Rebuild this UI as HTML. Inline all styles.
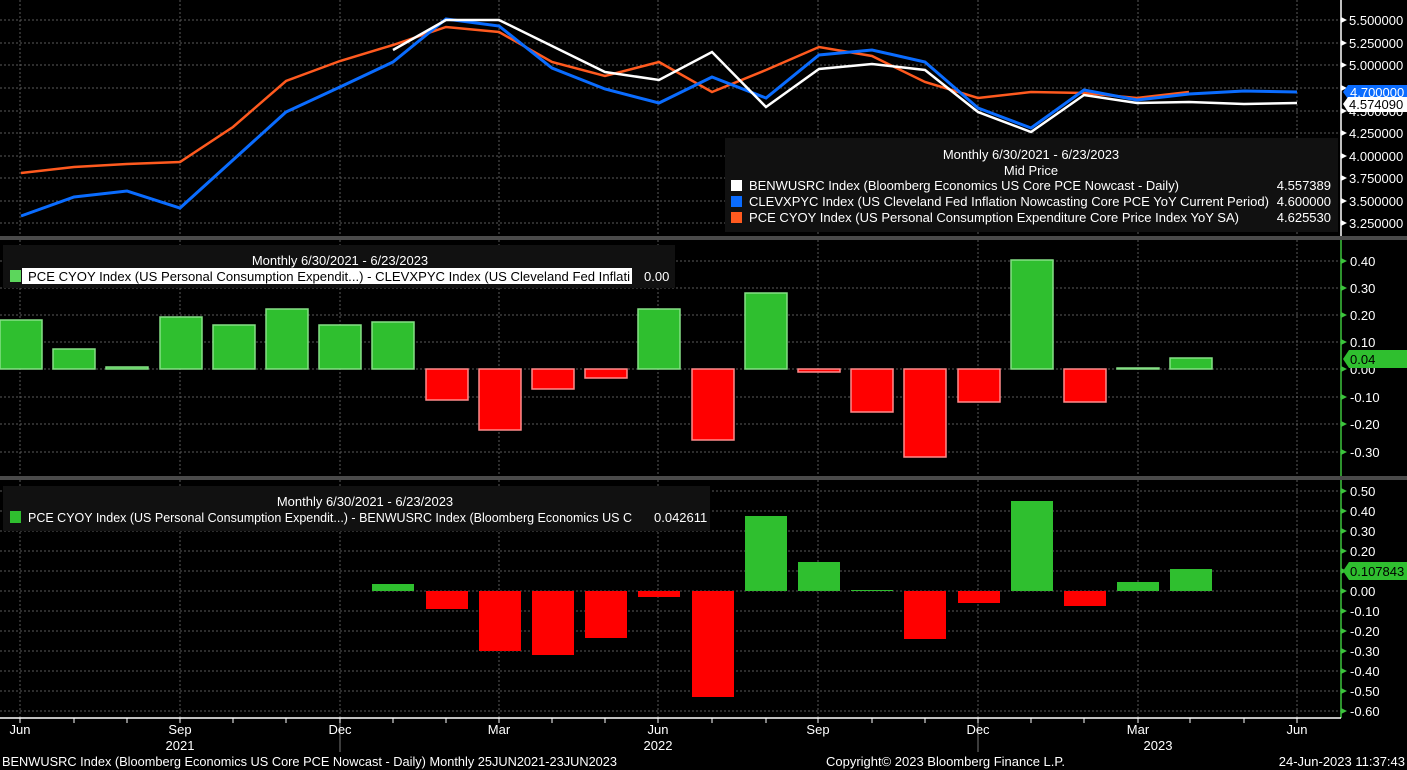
<!DOCTYPE html>
<html><head><meta charset="utf-8"><style>
html,body{margin:0;padding:0;background:#000;width:1407px;height:770px;overflow:hidden}
svg{display:block}
text{font-family:"Liberation Sans Narrow","Liberation Sans",sans-serif;font-size:13px;fill:#fff}
.ax{font-size:13px}
.g{stroke:#5a5a5a;stroke-width:1;stroke-dasharray:2,2}
.gb{fill:#2fbf2f;stroke:#86e086;stroke-width:1.5}
.rb{fill:#ff0000;stroke:#ff8a8a;stroke-width:1.5}
.gf{fill:#2fbf2f}.rf{fill:#ff0000}
</style></head><body>
<svg width="1407" height="770" viewBox="0 0 1407 770" xmlns="http://www.w3.org/2000/svg">
<rect width="1407" height="770" fill="#000"/>
<g class="g">
<line x1="20" y1="0" x2="20" y2="718"/><line x1="180" y1="0" x2="180" y2="718"/><line x1="340" y1="0" x2="340" y2="718"/><line x1="499" y1="0" x2="499" y2="718"/><line x1="658" y1="0" x2="658" y2="718"/><line x1="818" y1="0" x2="818" y2="718"/><line x1="978" y1="0" x2="978" y2="718"/><line x1="1138" y1="0" x2="1138" y2="718"/><line x1="1297" y1="0" x2="1297" y2="718"/>
<line x1="0" y1="20" x2="1341" y2="20"/><line x1="0" y1="43" x2="1341" y2="43"/><line x1="0" y1="65" x2="1341" y2="65"/><line x1="0" y1="88" x2="1341" y2="88"/><line x1="0" y1="111" x2="1341" y2="111"/><line x1="0" y1="133" x2="1341" y2="133"/><line x1="0" y1="156" x2="1341" y2="156"/><line x1="0" y1="178" x2="1341" y2="178"/><line x1="0" y1="201" x2="1341" y2="201"/><line x1="0" y1="223" x2="1341" y2="223"/>
<line x1="0" y1="261" x2="1341" y2="261"/><line x1="0" y1="288" x2="1341" y2="288"/><line x1="0" y1="315" x2="1341" y2="315"/><line x1="0" y1="342" x2="1341" y2="342"/><line x1="0" y1="369" x2="1341" y2="369"/><line x1="0" y1="397" x2="1341" y2="397"/><line x1="0" y1="424" x2="1341" y2="424"/><line x1="0" y1="452" x2="1341" y2="452"/>
<line x1="0" y1="491" x2="1341" y2="491"/><line x1="0" y1="511" x2="1341" y2="511"/><line x1="0" y1="531" x2="1341" y2="531"/><line x1="0" y1="551" x2="1341" y2="551"/><line x1="0" y1="571" x2="1341" y2="571"/><line x1="0" y1="591" x2="1341" y2="591"/><line x1="0" y1="611" x2="1341" y2="611"/><line x1="0" y1="631" x2="1341" y2="631"/><line x1="0" y1="651" x2="1341" y2="651"/><line x1="0" y1="671" x2="1341" y2="671"/><line x1="0" y1="691" x2="1341" y2="691"/><line x1="0" y1="711" x2="1341" y2="711"/>
</g>

<polyline fill="none" stroke="#ff5a1f" stroke-width="2.5" points="21,173 74,167 127,164 180,162 233,127 286,81 340,61 393,45 446,27 499,32 552,62 605,76 659,62 712,92 766,70 819,47 872,56 925,82 978,98 1031,92 1084,93 1137,98 1189,92"/>
<polyline fill="none" stroke="#0a6cff" stroke-width="3" points="21,216 74,197 127,191 180,208 233,160 286,112 340,87 393,62 446,19 499,26 552,68 605,89 659,103 712,77 766,98 819,55 872,50 925,62 978,108 1031,128 1084,90 1137,100 1189,94 1244,91 1297,92"/>
<polyline fill="none" stroke="#fff" stroke-width="2.5" points="393,50 446,20 499,20 552,46 605,72 659,80 712,52 766,107 819,69 872,64 925,70 978,112 1031,132 1084,95 1137,103 1189,102 1244,104 1297,103"/>

<rect x="725" y="138" width="613" height="94" fill="#111"/>
<text x="1031" y="159" text-anchor="middle">Monthly 6/30/2021 - 6/23/2023</text>
<text x="1031" y="175" text-anchor="middle">Mid Price</text>
<rect x="731" y="180" width="11" height="11" fill="#fff"/>
<text x="749" y="190" textLength="430" lengthAdjust="spacingAndGlyphs">BENWUSRC Index (Bloomberg Economics US Core PCE Nowcast - Daily)</text>
<text x="1331" y="190" text-anchor="end">4.557389</text>
<rect x="731" y="196" width="11" height="11" fill="#0a6cff"/>
<text x="749" y="206" textLength="520" lengthAdjust="spacingAndGlyphs">CLEVXPYC Index (US Cleveland Fed Inflation Nowcasting Core PCE YoY Current Period)</text>
<text x="1331" y="206" text-anchor="end">4.600000</text>
<rect x="731" y="212" width="11" height="11" fill="#ff5a1f"/>
<text x="749" y="222" textLength="490" lengthAdjust="spacingAndGlyphs">PCE CYOY Index (US Personal Consumption Expenditure Core Price Index YoY SA)</text>
<text x="1331" y="222" text-anchor="end">4.625530</text>

<rect x="0" y="236" width="1407" height="4" fill="#4a4a4a"/>
<rect x="0" y="476" width="1407" height="4" fill="#4a4a4a"/>

<rect class="gb" x="0" y="320" width="42" height="49"/>
<rect class="gb" x="53" y="349" width="42" height="20"/>
<rect class="gb" x="106" y="367" width="42" height="2"/>
<rect class="gb" x="160" y="317" width="42" height="52"/>
<rect class="gb" x="213" y="325" width="42" height="44"/>
<rect class="gb" x="266" y="309" width="42" height="60"/>
<rect class="gb" x="319" y="325" width="42" height="44"/>
<rect class="gb" x="372" y="322" width="42" height="47"/>
<rect class="rb" x="426" y="369" width="42" height="31"/>
<rect class="rb" x="479" y="369" width="42" height="61"/>
<rect class="rb" x="532" y="369" width="42" height="20"/>
<rect class="rb" x="585" y="369" width="42" height="9"/>
<rect class="gb" x="638" y="309" width="42" height="60"/>
<rect class="rb" x="692" y="369" width="42" height="71"/>
<rect class="gb" x="745" y="293" width="42" height="76"/>
<rect class="rb" x="798" y="369" width="42" height="3"/>
<rect class="rb" x="851" y="369" width="42" height="43"/>
<rect class="rb" x="904" y="369" width="42" height="88"/>
<rect class="rb" x="958" y="369" width="42" height="33"/>
<rect class="gb" x="1011" y="260" width="42" height="109"/>
<rect class="rb" x="1064" y="369" width="42" height="33"/>
<rect class="gb" x="1117" y="368" width="42" height="1"/>
<rect class="gb" x="1170" y="358" width="42" height="11"/>

<rect x="3" y="245" width="672" height="43" fill="#111"/>
<text x="340" y="265" text-anchor="middle">Monthly 6/30/2021 - 6/23/2023</text>
<rect x="10" y="270" width="11" height="12" fill="#5cd65c"/>
<rect x="22" y="268" width="610" height="16" fill="#fff"/>
<text x="28" y="281" style="fill:#000" textLength="602" lengthAdjust="spacingAndGlyphs">PCE CYOY Index (US Personal Consumption Expendit...) - CLEVXPYC Index (US Cleveland Fed Inflati</text>
<text x="644" y="281">0.00</text>

<rect class="gf" x="372" y="584" width="42" height="7"/>
<rect class="rf" x="426" y="591" width="42" height="18"/>
<rect class="rf" x="479" y="591" width="42" height="60"/>
<rect class="rf" x="532" y="591" width="42" height="64"/>
<rect class="rf" x="585" y="591" width="42" height="47"/>
<rect class="rf" x="638" y="591" width="42" height="6"/>
<rect class="rf" x="692" y="591" width="42" height="106"/>
<rect class="gf" x="745" y="516" width="42" height="75"/>
<rect class="gf" x="798" y="562" width="42" height="29"/>
<rect class="gf" x="851" y="590" width="42" height="1"/>
<rect class="rf" x="904" y="591" width="42" height="48"/>
<rect class="rf" x="958" y="591" width="42" height="12"/>
<rect class="gf" x="1011" y="501" width="42" height="90"/>
<rect class="rf" x="1064" y="591" width="42" height="15"/>
<rect class="gf" x="1117" y="582" width="42" height="9"/>
<rect class="gf" x="1170" y="569" width="42" height="22"/>

<rect x="3" y="486" width="707" height="45" fill="#111"/>
<text x="365" y="506" text-anchor="middle">Monthly 6/30/2021 - 6/23/2023</text>
<rect x="10" y="511" width="11" height="12" fill="#2fbf2f"/>
<text x="28" y="522" textLength="604" lengthAdjust="spacingAndGlyphs">PCE CYOY Index (US Personal Consumption Expendit...) - BENWUSRC Index (Bloomberg Economics US C</text>
<text x="654" y="522">0.042611</text>

<line x1="1341" y1="0" x2="1341" y2="236" stroke="#fff" stroke-width="1.5"/>
<line x1="1341" y1="240" x2="1341" y2="476" stroke="#3cc43c" stroke-width="1.5"/>
<line x1="1341" y1="480" x2="1341" y2="718" stroke="#3cc43c" stroke-width="1.5"/>
<g fill="#fff">
<path d="M1341,17 l6,3 l-6,3z M1341,40 l6,3 l-6,3z M1341,62 l6,3 l-6,3z M1341,85 l6,3 l-6,3z M1341,108 l6,3 l-6,3z M1341,130 l6,3 l-6,3z M1341,153 l6,3 l-6,3z M1341,175 l6,3 l-6,3z M1341,198 l6,3 l-6,3z M1341,220 l6,3 l-6,3z"/>
</g>
<g fill="#3cc43c">
<path d="M1341,258 l6,3 l-6,3z M1341,285 l6,3 l-6,3z M1341,312 l6,3 l-6,3z M1341,339 l6,3 l-6,3z M1341,366 l6,3 l-6,3z M1341,394 l6,3 l-6,3z M1341,421 l6,3 l-6,3z M1341,449 l6,3 l-6,3z"/>
<path d="M1341,488 l6,3 l-6,3z M1341,508 l6,3 l-6,3z M1341,528 l6,3 l-6,3z M1341,548 l6,3 l-6,3z M1341,568 l6,3 l-6,3z M1341,588 l6,3 l-6,3z M1341,608 l6,3 l-6,3z M1341,628 l6,3 l-6,3z M1341,648 l6,3 l-6,3z M1341,668 l6,3 l-6,3z M1341,688 l6,3 l-6,3z M1341,708 l6,3 l-6,3z"/>
</g>
<g class="ax">
<text x="1349" y="25">5.500000</text><text x="1349" y="48">5.250000</text><text x="1349" y="70">5.000000</text><text x="1349" y="116">4.500000</text><text x="1349" y="138">4.250000</text><text x="1349" y="161">4.000000</text><text x="1349" y="183">3.750000</text><text x="1349" y="206">3.500000</text><text x="1349" y="228">3.250000</text>
<text x="1350" y="266">0.40</text><text x="1350" y="293">0.30</text><text x="1350" y="320">0.20</text><text x="1350" y="347">0.10</text><text x="1350" y="374">0.00</text><text x="1350" y="402">-0.10</text><text x="1350" y="429">-0.20</text><text x="1350" y="457">-0.30</text>
<text x="1350" y="496">0.50</text><text x="1350" y="516">0.40</text><text x="1350" y="536">0.30</text><text x="1350" y="556">0.20</text><text x="1350" y="596">0.00</text><text x="1350" y="616">-0.10</text><text x="1350" y="636">-0.20</text><text x="1350" y="656">-0.30</text><text x="1350" y="676">-0.40</text><text x="1350" y="696">-0.50</text><text x="1350" y="716">-0.60</text>
</g>
<path d="M1343,92 l5,-7 h59 v14 h-59z" fill="#0a6cff"/>
<text x="1350" y="97" class="ax">4.700000</text>
<path d="M1343,104 l5,-7 h59 v15 h-59z" fill="#fff"/>
<text x="1349" y="109" class="ax" style="fill:#000">4.574090</text>
<path d="M1343,359 l6,-9 h58 v18 h-58z" fill="#2fbf2f"/>
<text x="1350" y="364" class="ax" style="fill:#000">0.04</text>
<path d="M1343,571 l6,-9 h58 v18 h-58z" fill="#2fbf2f"/>
<text x="1350" y="576" class="ax" style="fill:#000">0.107843</text>

<line x1="0" y1="718" x2="1341" y2="718" stroke="#fff" stroke-width="1.5"/>
<g stroke="#fff" stroke-width="1">
<line x1="20" y1="718" x2="20" y2="723"/><line x1="74" y1="718" x2="74" y2="723"/><line x1="127" y1="718" x2="127" y2="723"/><line x1="180" y1="718" x2="180" y2="723"/><line x1="233" y1="718" x2="233" y2="723"/><line x1="286" y1="718" x2="286" y2="723"/><line x1="340" y1="718" x2="340" y2="723"/><line x1="393" y1="718" x2="393" y2="723"/><line x1="446" y1="718" x2="446" y2="723"/><line x1="499" y1="718" x2="499" y2="723"/><line x1="552" y1="718" x2="552" y2="723"/><line x1="605" y1="718" x2="605" y2="723"/><line x1="658" y1="718" x2="658" y2="723"/><line x1="712" y1="718" x2="712" y2="723"/><line x1="766" y1="718" x2="766" y2="723"/><line x1="818" y1="718" x2="818" y2="723"/><line x1="872" y1="718" x2="872" y2="723"/><line x1="925" y1="718" x2="925" y2="723"/><line x1="978" y1="718" x2="978" y2="723"/><line x1="1031" y1="718" x2="1031" y2="723"/><line x1="1084" y1="718" x2="1084" y2="723"/><line x1="1138" y1="718" x2="1138" y2="723"/><line x1="1190" y1="718" x2="1190" y2="723"/><line x1="1244" y1="718" x2="1244" y2="723"/><line x1="1297" y1="718" x2="1297" y2="723"/>
</g>
<line x1="340" y1="723" x2="340" y2="752" stroke="#777"/>
<line x1="978" y1="723" x2="978" y2="752" stroke="#777"/>
<g class="ax" text-anchor="middle">
<text x="20" y="734">Jun</text><text x="180" y="734">Sep</text><text x="340" y="734">Dec</text><text x="499" y="734">Mar</text><text x="658" y="734">Jun</text><text x="818" y="734">Sep</text><text x="978" y="734">Dec</text><text x="1138" y="734">Mar</text><text x="1297" y="734">Jun</text>
<text x="180" y="750">2021</text><text x="658" y="750">2022</text><text x="1158" y="750">2023</text>
</g>
<text x="2" y="766" textLength="615" lengthAdjust="spacingAndGlyphs">BENWUSRC Index (Bloomberg Economics US Core PCE Nowcast - Daily)  Monthly 25JUN2021-23JUN2023</text>
<text x="826" y="766" textLength="239" lengthAdjust="spacingAndGlyphs">Copyright© 2023 Bloomberg Finance L.P.</text>
<text x="1405" y="766" text-anchor="end">24-Jun-2023 11:37:43</text>
</svg>
</body></html>
